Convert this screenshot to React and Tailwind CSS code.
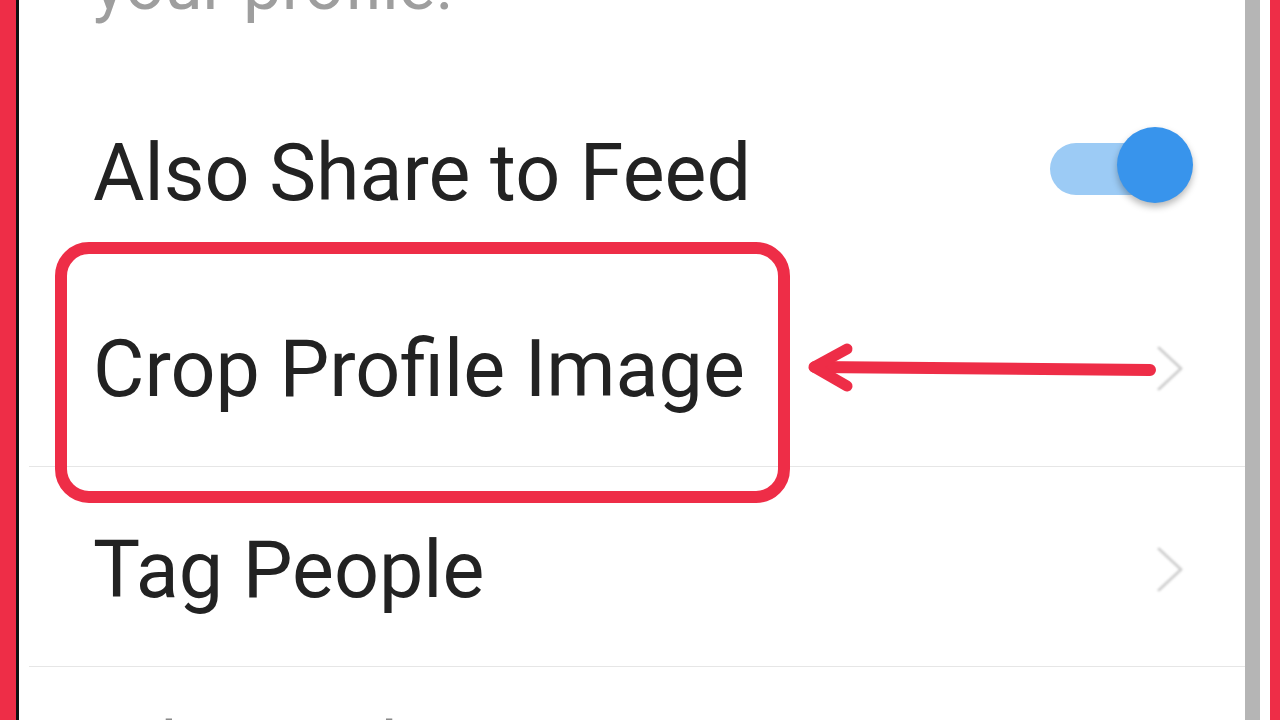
import React from 'react'

function Toggle() {
  return (
    <div className="relative mb-[16px] w-[143px] h-[76px]">
      <div className="absolute left-0 top-[16px] h-[52px] w-[120px] rounded-full bg-[#9ccbf5]" />
      <div className="absolute right-0 top-0 h-[76px] w-[76px] rounded-full bg-[#3894ec] shadow-[0_4px_7px_rgba(0,0,0,0.28)]" />
    </div>
  )
}

function Chevron() {
  return (
    <svg width="28" height="48" viewBox="0 0 28 48" className="mr-[9px] blur-[0.8px]">
      <path d="M3 3 L25 23.5 L3 44" fill="none" stroke="#cfcfcf" strokeWidth="3" strokeLinecap="round" strokeLinejoin="round" />
    </svg>
  )
}

function Divider() {
  return <div className="ml-[10px] h-px bg-[#e6e6e6]" />
}

export default function App() {
  return (
    <div className="flex h-[720px] w-[1280px] overflow-hidden bg-white font-['Roboto','Liberation_Sans',sans-serif]">
      <div className="w-[16px] bg-[#ee2d47]" />
      <div className="w-[3px] bg-[#111]" />

      <div className="relative flex-1 bg-white">
        <div className="-mt-[54px] h-[80px] pl-[74px] text-[69px] leading-[80px] text-[#9e9e9e]">
          your profile.
        </div>

        <div className="mt-[54px] flex h-[186px] items-center justify-between pl-[74px] pr-[52px]">
          <span className="text-[79px] leading-[94px] text-[#222]">Also Share to Feed</span>
          <Toggle />
        </div>

        <div className="flex h-[200px] items-center justify-between pl-[74px] pr-[52px] pt-[6px]">
          <span className="text-[79px] leading-[94px] text-[#222]">Crop Profile Image</span>
          <Chevron />
        </div>
        <Divider />

        <div className="flex h-[199px] items-center justify-between pl-[74px] pr-[52px] pt-[7px]">
          <span className="text-[79px] leading-[94px] text-[#222]">Tag People</span>
          <Chevron />
        </div>
        <Divider />

        <div className="mt-[40px] h-[80px] pl-[74px] text-[69px] leading-[80px] text-[#8a8a8a]">
          Advanced Settings
        </div>

        {/* annotation: box + arrow drawn over the list */}
        <div className="absolute left-[36px] top-[242px] h-[261px] w-[735px] rounded-[34px] border-[12px] border-[#ee2d47]" />
        <svg className="absolute left-[762px] top-[335px]" width="390" height="70" viewBox="0 0 390 70">
          <path d="M34 32 L369 35" fill="none" stroke="#ee2d47" strokeWidth="12" strokeLinecap="round" />
          <path d="M66 14 L33 32 L66 51" fill="none" stroke="#ee2d47" strokeWidth="11" strokeLinecap="round" strokeLinejoin="round" />
        </svg>
      </div>

      <div className="w-[15px] bg-[#b5b5b5]" />
      <div className="w-[10px] bg-white" />
      <div className="w-[10px] bg-[#ee2d47]" />
    </div>
  )
}
